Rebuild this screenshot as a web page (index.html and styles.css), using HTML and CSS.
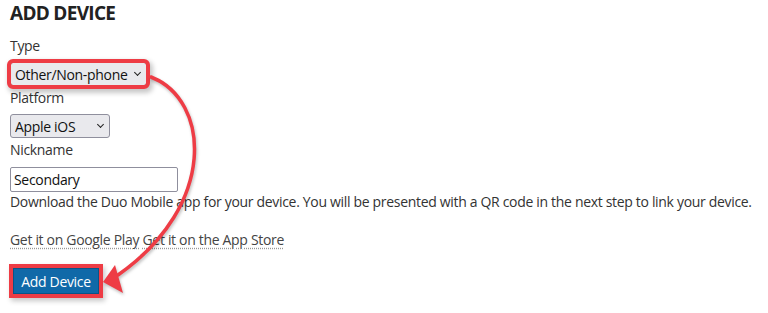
FILE: index.html
```html
<!DOCTYPE html>
<html lang="en">
<head>
<meta charset="utf-8">
<title>Add Device</title>
<link rel="stylesheet" href="styles.css">
</head>
<body>
<main class="page">
  <h2 class="title">ADD DEVICE</h2>
  <form class="form">
    <label class="label label-first" for="type">Type</label>
    <div class="field">
      <div class="select-wrap highlight-select">
        <select id="type" class="select select-type">
          <option>Other/Non-phone</option>
        </select>
      </div>
    </div>
    <label class="label" for="platform">Platform</label>
    <div class="field">
      <div class="select-wrap">
        <select id="platform" class="select select-platform">
          <option>Apple iOS</option>
        </select>
      </div>
    </div>
    <label class="label" for="nick">Nickname</label>
    <div class="field field-input">
      <input id="nick" class="input" type="text" value="Secondary">
    </div>
    <p class="info">Download the Duo Mobile app for your device. You will be presented with a QR code in the next step to link your device.</p>
    <p class="links"><a class="link" href="#">Get it on Google Play</a> <a class="link" href="#">Get it on the App Store</a></p>
    <div class="actions">
      <button type="button" class="btn highlight-btn">Add Device</button>
    </div>
  </form>
  <svg class="arrow" width="768" height="313" viewBox="0 0 768 313" aria-hidden="true">
    <path d="M151 77 C 210 100, 218 205, 118 275" fill="none" stroke="#ee3c45" stroke-width="3.5" stroke-linecap="round"/>
    <polygon points="103,282 115,265 123,293" fill="#ee3c45"/>
  </svg>
</main>
</body>
</html>
```
FILE: styles.css
```css
html, body {
  margin: 0;
  padding: 0;
  background: #ffffff;
}
.page {
  position: relative;
  width: 768px;
  height: 313px;
  padding: 0 10px;
  box-sizing: border-box;
  font-family: "Open Sans", "Noto Sans", sans-serif;
  font-size: 14px;
  letter-spacing: -0.32px;
  color: #333333;
  overflow: hidden;
}
.title {
  margin: 0;
  font-size: 19px;
  font-weight: 700;
  line-height: 26px;
  letter-spacing: -0.7px;
  color: #222222;
}
.form {
  display: flex;
  flex-direction: column;
  align-items: flex-start;
}
.label {
  display: block;
  margin-top: 2px;
  line-height: 20px;
}
.label-first {
  margin-top: 10px;
}
.field {
  margin-top: 6px;
  display: flex;
}
.field-input {
  margin-top: 7px;
}
.select-wrap {
  position: relative;
  display: flex;
  border-radius: 3px;
}
.select-wrap::after {
  content: "";
  position: absolute;
  right: 7px;
  top: 8px;
  width: 4px;
  height: 4px;
  border-right: 1.6px solid #222;
  border-bottom: 1.6px solid #222;
  transform: rotate(45deg);
  pointer-events: none;
}
.select {
  -webkit-appearance: none;
  appearance: none;
  font-family: inherit;
  font-size: 14px;
  letter-spacing: -0.32px;
  height: 24px;
  box-sizing: border-box;
  padding: 0 18px 0 4px;
  color: #111;
  background-color: #e9e9ed;
  border: 1px solid #8f8f9d;
  border-radius: 3px;
}
.select-type {
  width: 137px;
}
.select-platform {
  width: 100px;
}
.input {
  font-family: inherit;
  font-size: 14px;
  letter-spacing: -0.32px;
  width: 168px;
  height: 25px;
  box-sizing: border-box;
  padding: 0 3px;
  border: 1px solid #8f8f9d;
  border-radius: 2px;
  color: #111;
}
.info {
  margin: 0;
  line-height: 20px;
  white-space: nowrap;
}
.links {
  margin: 18px 0 0;
  line-height: 20px;
}
.link {
  color: #444444;
  text-decoration: underline dotted #999;
  text-underline-offset: 3px;
}
.actions {
  margin-top: 18px;
}
.btn {
  font-family: inherit;
  font-size: 14px;
  letter-spacing: -0.32px;
  color: #ffffff;
  background: #1069a8;
  border: 1px solid #0a5487;
  height: 26px;
  width: 86px;
  padding: 0;
  margin-left: 3px;
}
.highlight-select {
  outline: 4px solid #ee3c45;
  outline-offset: -1px;
  box-shadow: 2px 3px 5px 4px rgba(0,0,0,0.22);
}
.highlight-btn {
  outline: 4px solid #ee3c45;
  outline-offset: 0;
  box-shadow: 2px 3px 5px 4px rgba(0,0,0,0.22);
}
.arrow {
  position: absolute;
  left: 0;
  top: 0;
  pointer-events: none;
  filter: drop-shadow(1px 2px 1.5px rgba(0,0,0,0.25));
}
```
